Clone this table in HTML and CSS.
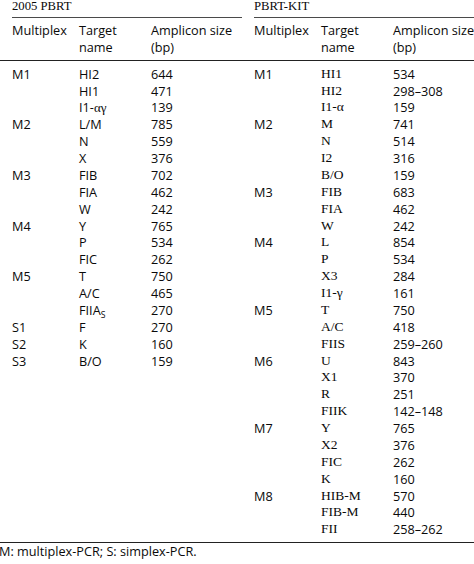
FILE: index.html
```html
<!DOCTYPE html>
<html lang="en">
<head>
<meta charset="utf-8">
<title>PBRT multiplex targets</title>
<link rel="stylesheet" href="styles.css">
</head>
<body>
<div class="page">
  <div class="groups">
    <section class="group group-left">
      <div class="title"><span class="title-text">2005 PBRT</span></div>
      <div class="head">
        <div class="cell">Multiplex</div><div class="cell">Target<br>name</div><div class="cell">Amplicon size<br>(bp)</div>
      </div>
      <div class="rows">
        <div class="cell">M1</div><div class="cell">HI2</div><div class="cell">644</div>
        <div class="cell"></div><div class="cell">HI1</div><div class="cell">471</div>
        <div class="cell"></div><div class="cell">I1-<span class="greek">αγ</span></div><div class="cell">139</div>
        <div class="cell">M2</div><div class="cell">L/M</div><div class="cell">785</div>
        <div class="cell"></div><div class="cell">N</div><div class="cell">559</div>
        <div class="cell"></div><div class="cell">X</div><div class="cell">376</div>
        <div class="cell">M3</div><div class="cell">FIB</div><div class="cell">702</div>
        <div class="cell"></div><div class="cell">FIA</div><div class="cell">462</div>
        <div class="cell"></div><div class="cell">W</div><div class="cell">242</div>
        <div class="cell">M4</div><div class="cell">Y</div><div class="cell">765</div>
        <div class="cell"></div><div class="cell">P</div><div class="cell">534</div>
        <div class="cell"></div><div class="cell">FIC</div><div class="cell">262</div>
        <div class="cell">M5</div><div class="cell">T</div><div class="cell">750</div>
        <div class="cell"></div><div class="cell">A/C</div><div class="cell">465</div>
        <div class="cell"></div><div class="cell">FIIA<span class="sub">S</span></div><div class="cell">270</div>
        <div class="cell">S1</div><div class="cell">F</div><div class="cell">270</div>
        <div class="cell">S2</div><div class="cell">K</div><div class="cell">160</div>
        <div class="cell">S3</div><div class="cell">B/O</div><div class="cell">159</div>
      </div>
    </section>
    <section class="group group-right">
      <div class="title"><span class="title-text">PBRT-KIT</span></div>
      <div class="head">
        <div class="cell">Multiplex</div><div class="cell">Target<br>name</div><div class="cell">Amplicon size<br>(bp)</div>
      </div>
      <div class="rows">
        <div class="cell">M1</div><div class="cell serif">HI1</div><div class="cell">534</div>
        <div class="cell"></div><div class="cell serif">HI2</div><div class="cell">298–308</div>
        <div class="cell"></div><div class="cell serif">I1-α</div><div class="cell">159</div>
        <div class="cell">M2</div><div class="cell serif">M</div><div class="cell">741</div>
        <div class="cell"></div><div class="cell serif">N</div><div class="cell">514</div>
        <div class="cell"></div><div class="cell serif">I2</div><div class="cell">316</div>
        <div class="cell"></div><div class="cell serif">B/O</div><div class="cell">159</div>
        <div class="cell">M3</div><div class="cell serif">FIB</div><div class="cell">683</div>
        <div class="cell"></div><div class="cell serif">FIA</div><div class="cell">462</div>
        <div class="cell"></div><div class="cell serif">W</div><div class="cell">242</div>
        <div class="cell">M4</div><div class="cell serif">L</div><div class="cell">854</div>
        <div class="cell"></div><div class="cell serif">P</div><div class="cell">534</div>
        <div class="cell"></div><div class="cell serif">X3</div><div class="cell">284</div>
        <div class="cell"></div><div class="cell serif">I1-γ</div><div class="cell">161</div>
        <div class="cell">M5</div><div class="cell serif">T</div><div class="cell">750</div>
        <div class="cell"></div><div class="cell serif">A/C</div><div class="cell">418</div>
        <div class="cell"></div><div class="cell serif">FIIS</div><div class="cell">259–260</div>
        <div class="cell">M6</div><div class="cell serif">U</div><div class="cell">843</div>
        <div class="cell"></div><div class="cell serif">X1</div><div class="cell">370</div>
        <div class="cell"></div><div class="cell serif">R</div><div class="cell">251</div>
        <div class="cell"></div><div class="cell serif">FIIK</div><div class="cell">142–148</div>
        <div class="cell">M7</div><div class="cell serif">Y</div><div class="cell">765</div>
        <div class="cell"></div><div class="cell serif">X2</div><div class="cell">376</div>
        <div class="cell"></div><div class="cell serif">FIC</div><div class="cell">262</div>
        <div class="cell"></div><div class="cell serif">K</div><div class="cell">160</div>
        <div class="cell">M8</div><div class="cell serif">HIB-M</div><div class="cell">570</div>
        <div class="cell"></div><div class="cell serif">FIB-M</div><div class="cell">440</div>
        <div class="cell"></div><div class="cell serif">FII</div><div class="cell">258–262</div>
      </div>
    </section>
  </div>
  <p class="note">M: multiplex-PCR; S: simplex-PCR.</p>
</div>
</body>
</html>
```

FILE: styles.css
```css
html, body {
  margin: 0;
  padding: 0;
  background: #ffffff;
}
body {
  color: #0a0a0a;
  font-family: "Open Sans", "Liberation Sans", sans-serif;
  font-size: 12.7px;
  line-height: 16.875px;
}
.page {
  width: 474px;
  height: 564px;
  overflow: hidden;
}
.groups {
  display: flex;
  align-items: flex-start;
  border-bottom: 1px solid #222;
  width: 474px;
  overflow: hidden;
}
.group-left {
  width: 242px;
  flex: none;
}
.group-right {
  width: 250px;
  flex: none;
}
.title {
  padding-left: 12px;
  font-family: "Liberation Serif", "Times New Roman", serif;
  font-size: 12.7px;
  line-height: 12px;
  height: 18px;
  box-sizing: border-box;
}
.title-text {
  display: block;
  height: 18px;
  box-sizing: border-box;
  border-bottom: 1px solid #4a4a4a;
}
.head,
.rows {
  display: grid;
  grid-template-columns: 67px 72px 1fr;
}
.head {
  grid-template-rows: 33.75px;
  padding: 4.3px 0 4px;
  border-bottom: 1px solid #222;
}
.rows {
  grid-auto-rows: 16.875px;
  padding: 4.6px 0 4px;
}
.cell {
  padding-left: 12px;
  white-space: nowrap;
  min-width: 0;
}
.serif {
  font-family: "Liberation Serif", "Times New Roman", serif;
  font-size: 13.5px;
}
.greek {
  font-family: "Liberation Serif", "Times New Roman", serif;
  font-size: 13px;
}
.sub {
  font-size: 0.68em;
  line-height: 0;
  vertical-align: -0.3em;
}
.note {
  margin: 0 0 0 -1px;
  padding: 0;
}
```
